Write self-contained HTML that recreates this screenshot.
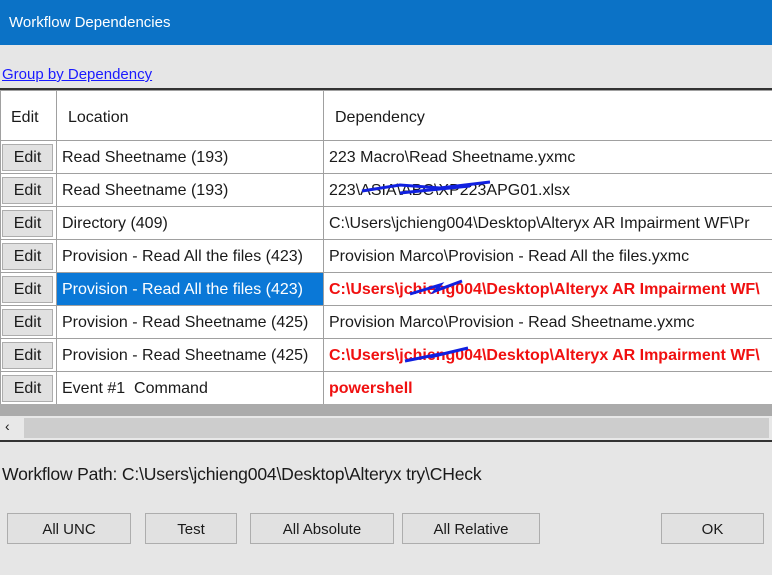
<html><head><style>
body{margin:0;width:772px;height:575px;background:#e6e6e6;font-family:"Liberation Sans",sans-serif;position:relative;overflow:hidden;font-size:15px;color:#1a1a1a}
.t{position:absolute;left:0;top:0;width:772px;height:45px;background:#0b72c6;color:#fff;font-size:15px;line-height:45px;text-indent:9px}
a{position:absolute;left:2px;top:66px;color:#1a1aff;text-decoration:underline;font-size:15px}
.line{position:absolute;left:0;top:88px;width:772px;height:2px;background:#333}
table{position:absolute;left:0;top:90px;border-collapse:collapse;background:#fff;table-layout:fixed;width:900px}
td{border:1px solid #a0a0a0;height:32px;padding:2px 0 0 5px;white-space:nowrap;overflow:hidden}
tr{height:33px}
tr.h{height:50px}
tr.h td{padding-left:11px;padding-top:4px}
td.e{padding:0 1px}
.b{background:#e1e1e1;border:1px solid #adadad;height:25px;line-height:25px;text-align:center;width:49px}
.sel{background:#0a78d7;color:#fff}
.r{color:#f01010;font-weight:bold}
.strip{position:absolute;left:0;top:404px;width:772px;height:12px;background:#ababab}
.sb{position:absolute;left:0;top:416px;width:772px;height:24px;background:#e8e8e8}
.sb div{position:absolute;left:24px;top:2px;width:745px;height:20px;background:#cdcdcd}
.line2{position:absolute;left:0;top:440px;width:772px;height:2px;background:#333}
.wp{position:absolute;left:2px;top:464px;font-size:17.6px;letter-spacing:-0.2px}
.btn{position:absolute;top:513px;height:31px;border:1px solid #adadad;background:#e1e1e1;text-align:center;line-height:31px;box-sizing:border-box;font-size:15px}
</style></head><body>
<div class="t">Workflow Dependencies</div>
<a>Group by Dependency</a>
<div class="line"></div>
<table>
<colgroup><col style="width:56px"><col style="width:267px"><col style="width:577px"></colgroup>
<tr class="h"><td style="padding-left:10px">Edit</td><td>Location</td><td>Dependency</td></tr>
<tr><td class="e"><div class="b">Edit</div></td><td>Read Sheetname (193)</td><td>223 Macro\Read Sheetname.yxmc</td></tr>
<tr><td class="e"><div class="b">Edit</div></td><td>Read Sheetname (193)</td><td>223\ASIA\ABC\XP223APG01.xlsx</td></tr>
<tr><td class="e"><div class="b">Edit</div></td><td>Directory (409)</td><td>C:\Users\jchieng004\Desktop\Alteryx AR Impairment WF\Pr</td></tr>
<tr><td class="e"><div class="b">Edit</div></td><td>Provision - Read All the files (423)</td><td>Provision Marco\Provision - Read All the files.yxmc</td></tr>
<tr><td class="e"><div class="b">Edit</div></td><td class="sel">Provision - Read All the files (423)</td><td class="r">C:\Users\jchieng004\Desktop\Alteryx AR Impairment WF\</td></tr>
<tr><td class="e"><div class="b">Edit</div></td><td>Provision - Read Sheetname (425)</td><td>Provision Marco\Provision - Read Sheetname.yxmc</td></tr>
<tr><td class="e"><div class="b">Edit</div></td><td>Provision - Read Sheetname (425)</td><td class="r">C:\Users\jchieng004\Desktop\Alteryx AR Impairment WF\</td></tr>
<tr><td class="e"><div class="b">Edit</div></td><td>Event #1&nbsp; Command</td><td class="r">powershell</td></tr>
</table>
<svg style="position:absolute;left:0;top:0" width="772" height="575">
<path d="M362 191 L400 185 L440 188 L490 182 M400 193 L470 186" stroke="#1020e0" stroke-width="3" fill="none"/>
<path d="M410 294 L440 285 L435 291 L462 281" stroke="#1020e0" stroke-width="3" fill="none"/>
<path d="M405 361 L440 354 L430 357 L468 348" stroke="#1020e0" stroke-width="3" fill="none"/>
</svg>
<div class="strip"></div>
<div class="sb"><span style="position:absolute;left:5px;top:2px;font-size:14px">‹</span><div></div></div>
<div class="line2"></div>
<div class="wp">Workflow Path: C:\Users\jchieng004\Desktop\Alteryx try\CHeck</div>
<div class="btn" style="left:7px;width:124px">All UNC</div>
<div class="btn" style="left:145px;width:92px">Test</div>
<div class="btn" style="left:250px;width:144px">All Absolute</div>
<div class="btn" style="left:402px;width:138px">All Relative</div>
<div class="btn" style="left:661px;width:103px">OK</div>
</body></html>
